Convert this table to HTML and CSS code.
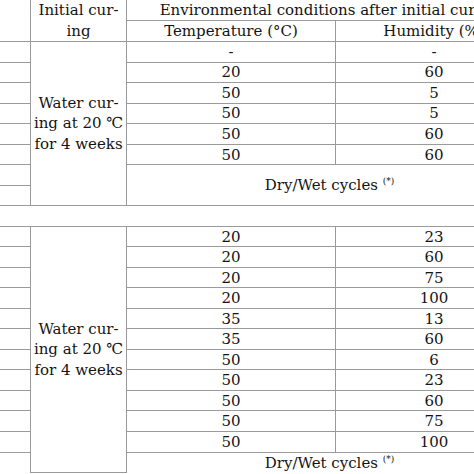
FILE: index.html
```html
<!DOCTYPE html>
<html>
<head>
<meta charset="utf-8">
<link rel="stylesheet" href="styles.css">
</head>
<body>
<table class="tbl">
<colgroup><col class="c1"><col class="c2"><col class="c3"><col class="c4"></colgroup>
<tr class="h1"><td rowspan="2"></td><td rowspan="2" class="ml">Initial cur-<br>ing</td><td colspan="2">Environmental conditions after initial curing</td></tr>
<tr class="h2"><td>Temperature (°C)</td><td>Humidity (%)</td></tr>
<tr><td></td><td rowspan="8" class="ml">Water cur-<br>ing at 20 ℃<br>for 4 weeks</td><td>-</td><td>-</td></tr>
<tr><td></td><td>20</td><td>60</td></tr>
<tr><td></td><td>50</td><td>5</td></tr>
<tr><td></td><td>50</td><td>5</td></tr>
<tr><td></td><td>50</td><td>60</td></tr>
<tr><td></td><td>50</td><td>60</td></tr>
<tr><td></td><td colspan="2" rowspan="2">Dry/Wet cycles <sup>(*)</sup></td></tr>
<tr><td></td></tr>
<tr class="gap"><td colspan="4"></td></tr>
<tr><td></td><td rowspan="12" class="ml">Water cur-<br>ing at 20 ℃<br>for 4 weeks</td><td>20</td><td>23</td></tr>
<tr><td></td><td>20</td><td>60</td></tr>
<tr><td></td><td>20</td><td>75</td></tr>
<tr><td></td><td>20</td><td>100</td></tr>
<tr><td></td><td>35</td><td>13</td></tr>
<tr><td></td><td>35</td><td>60</td></tr>
<tr><td></td><td>50</td><td>6</td></tr>
<tr><td></td><td>50</td><td>23</td></tr>
<tr><td></td><td>50</td><td>60</td></tr>
<tr><td></td><td>50</td><td>75</td></tr>
<tr><td></td><td>50</td><td>100</td></tr>
<tr class="last"><td></td><td colspan="2">Dry/Wet cycles <sup>(*)</sup></td></tr>
</table>
</body>
</html>
```
FILE: styles.css
```css
html, body {
  margin: 0;
  padding: 0;
  background: #ffffff;
  overflow: hidden;
  width: 474px;
  height: 474px;
}
.tbl {
  border-collapse: collapse;
  table-layout: fixed;
  width: 562px;
  margin-left: -30px;
  margin-top: -1px;
  font-family: "DejaVu Serif", "Liberation Serif", serif;
  font-size: 15px;
  color: #141414;
}
.c1 { width: 60px; }
.c2 { width: 96px; }
.c3 { width: 209px; }
.c4 { width: 197px; }
.tbl td {
  border: 1px solid #9a9a9a;
  padding: 0;
  text-align: center;
  vertical-align: middle;
  line-height: 18px;
  white-space: nowrap;
  overflow: visible;
}
.tbl tr { height: 20.53px; }
.tbl tr.h1 { height: 20.5px; }
.tbl tr.h2 { height: 21px; }
.tbl td.ml {
  line-height: 20.6px;
}
.tbl tr.gap td {
  border-left: none;
  border-right: none;
}
.tbl tr.last td {
  border-bottom: none;
}
sup {
  font-size: 9px;
  line-height: 0;
  vertical-align: 6px;
}
```
